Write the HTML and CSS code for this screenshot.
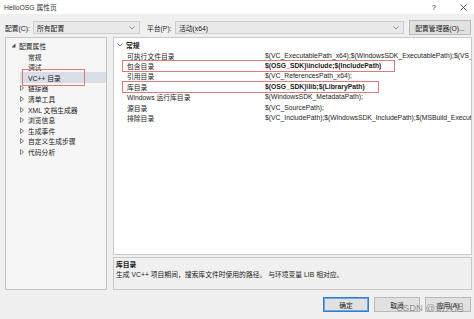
FILE: index.html
```html
<!DOCTYPE html>
<html lang="zh-CN">
<head>
    <meta charset="UTF-8">
    <title>HelloOSG 属性页</title>
    <link rel="stylesheet" href="styles.css">
</head>
<body>
    <div class="dialog">
        <header class="titlebar">
            <span class="title">HelloOSG 属性页</span>
            <div class="window-btns">
                <span class="help">?</span>
                <svg class="close" width="7" height="7" viewBox="0 0 7 7">
                    <path d="M0.5 0.5L6.5 6.5M6.5 0.5L0.5 6.5" stroke="#333" stroke-width="0.8"/>
                </svg>
            </div>
        </header>

        <div class="toolbar">
            <span class="label">配置(C):</span>
            <div class="combo combo-config">
                <span>所有配置</span>
                <svg width="6" height="4" viewBox="0 0 6 4"><path d="M0.5 0.5L3 3L5.5 0.5" fill="none" stroke="#777" stroke-width="0.8"/></svg>
            </div>
            <span class="label label-platform">平台(P):</span>
            <div class="combo combo-platform">
                <span>活动(x64)</span>
                <svg width="6" height="4" viewBox="0 0 6 4"><path d="M0.5 0.5L3 3L5.5 0.5" fill="none" stroke="#777" stroke-width="0.8"/></svg>
            </div>
            <button class="btn btn-manager">配置管理器(O)...</button>
        </div>

        <div class="main">
            <aside class="tree">
                <div class="node level-0">
                    <span class="twisty"><svg width="5" height="5" viewBox="0 0 5 5"><path d="M4.5 0.5V4.5H0.5Z" fill="#444"/></svg></span>
                    <span>配置属性</span>
                </div>
                <div class="node level-1"><span class="twisty"></span><span>常规</span></div>
                <div class="node level-1"><span class="twisty"></span><span>调试</span></div>
                <div class="node level-1 selected"><span class="twisty"></span><span>VC++ 目录</span></div>
                <div class="node level-1 collapsed"><span class="twisty"><svg width="4" height="6" viewBox="0 0 4 6"><path d="M0.5 0.5L3.5 3L0.5 5.5Z" fill="none" stroke="#555" stroke-width="0.7"/></svg></span><span>链接器</span></div>
                <div class="node level-1 collapsed"><span class="twisty"><svg width="4" height="6" viewBox="0 0 4 6"><path d="M0.5 0.5L3.5 3L0.5 5.5Z" fill="none" stroke="#555" stroke-width="0.7"/></svg></span><span>清单工具</span></div>
                <div class="node level-1 collapsed"><span class="twisty"><svg width="4" height="6" viewBox="0 0 4 6"><path d="M0.5 0.5L3.5 3L0.5 5.5Z" fill="none" stroke="#555" stroke-width="0.7"/></svg></span><span>XML 文档生成器</span></div>
                <div class="node level-1 collapsed"><span class="twisty"><svg width="4" height="6" viewBox="0 0 4 6"><path d="M0.5 0.5L3.5 3L0.5 5.5Z" fill="none" stroke="#555" stroke-width="0.7"/></svg></span><span>浏览信息</span></div>
                <div class="node level-1 collapsed"><span class="twisty"><svg width="4" height="6" viewBox="0 0 4 6"><path d="M0.5 0.5L3.5 3L0.5 5.5Z" fill="none" stroke="#555" stroke-width="0.7"/></svg></span><span>生成事件</span></div>
                <div class="node level-1 collapsed"><span class="twisty"><svg width="4" height="6" viewBox="0 0 4 6"><path d="M0.5 0.5L3.5 3L0.5 5.5Z" fill="none" stroke="#555" stroke-width="0.7"/></svg></span><span>自定义生成步骤</span></div>
                <div class="node level-1 collapsed"><span class="twisty"><svg width="4" height="6" viewBox="0 0 4 6"><path d="M0.5 0.5L3.5 3L0.5 5.5Z" fill="none" stroke="#555" stroke-width="0.7"/></svg></span><span>代码分析</span></div>
            </aside>

            <section class="content">
                <div class="grid">
                    <div class="row group">
                        <span class="chevron"><svg width="6" height="4" viewBox="0 0 6 4"><path d="M0.5 0.5L3 3L5.5 0.5" fill="none" stroke="#555" stroke-width="0.8"/></svg></span>
                        <span class="group-name">常规</span>
                    </div>
                    <div class="row"><div class="cells"><span class="name">可执行文件目录</span><span class="value">$(VC_ExecutablePath_x64);$(WindowsSDK_ExecutablePath);$(VS_ExecutablePath);$(MSBuild_ExecutablePath)</span></div></div>
                    <div class="row"><div class="cells marked"><span class="name">包含目录</span><span class="value bold">$(OSG_SDK)\include;$(IncludePath)</span></div></div>
                    <div class="row"><div class="cells"><span class="name">引用目录</span><span class="value">$(VC_ReferencesPath_x64);</span></div></div>
                    <div class="row"><div class="cells marked"><span class="name">库目录</span><span class="value bold">$(OSG_SDK)\lib;$(LibraryPath)</span></div></div>
                    <div class="row"><div class="cells"><span class="name">Windows 运行库目录</span><span class="value">$(WindowsSDK_MetadataPath);</span></div></div>
                    <div class="row"><div class="cells"><span class="name">源目录</span><span class="value">$(VC_SourcePath);</span></div></div>
                    <div class="row"><div class="cells"><span class="name">排除目录</span><span class="value">$(VC_IncludePath);$(WindowsSDK_IncludePath);$(MSBuild_ExecutablePath);$(VC_LibraryPath_x64)</span></div></div>
                </div>
                <div class="desc">
                    <div class="desc-title">库目录</div>
                    <div>生成 VC++ 项目期间，搜索库文件时使用的路径。 与环境变量 LIB 相对应。</div>
                </div>
            </section>
        </div>

        <footer class="footer">
            <button class="btn btn-default">确定</button>
            <button class="btn">取消</button>
            <button class="btn">应用(A)</button>
        </footer>

        <div class="watermark">CSDN @谢大旭</div>
    </div>
</body>
</html>
```

FILE: styles.css
```css
body {
    margin: 0;
    font-family: "Liberation Sans", "Noto Sans CJK SC", sans-serif;
    font-size: 6.8px;
    color: #222;
}

.dialog {
    position: relative;
    width: 474px;
    height: 319px;
    background: #f0f0f0;
    display: flex;
    flex-direction: column;
    overflow: hidden;
}

/* title bar */
.titlebar {
    height: 14px;
    background: #fff;
    display: flex;
    align-items: center;
    justify-content: space-between;
    padding: 0 7px 0 4px;
    color: #333;
}

.window-btns {
    display: flex;
    align-items: center;
    gap: 24px;
}

.help {
    font-size: 7.5px;
}

/* configuration bar */
.toolbar {
    display: flex;
    align-items: center;
    height: 15px;
    margin-top: 6px;
    padding-left: 5px;
}

.label {
    width: 28px;
}

.label-platform {
    margin-left: 7px;
}

.combo {
    height: 13px;
    box-sizing: border-box;
    border: 1px solid #cdcdcd;
    background: #e9e9e9;
    display: flex;
    align-items: center;
    justify-content: space-between;
    padding: 0 4px 0 3px;
}

.combo-config {
    width: 107px;
}

.combo-platform {
    width: 229px;
}

.btn {
    font: inherit;
    color: #222;
    height: 15px;
    width: 46px;
    padding: 0;
    background: #e1e1e1;
    border: 1px solid #b9b9b9;
}

.btn-manager {
    width: 62px;
    margin-left: 5px;
}

/* tree + grid */
.main {
    display: flex;
    gap: 6px;
    height: 253px;
    margin-top: 2px;
    padding: 0 2px 0 5px;
}

.tree {
    width: 102px;
    box-sizing: border-box;
    border: 1px solid #c4c4c4;
    background: #f6f6f6;
    padding-top: 2.7px;
}

.node {
    height: 10.6px;
    display: flex;
    align-items: center;
}

.twisty {
    width: 8px;
    height: 10.6px;
    display: flex;
    align-items: center;
}

.level-0 {
    padding-left: 5px;
}

.level-1 {
    margin-left: 14px;
}

.selected {
    position: relative;
    background: #d9dde6;
}

.selected::after {
    content: "";
    position: absolute;
    left: 2px;
    top: -3.5px;
    width: 63px;
    height: 17px;
    box-sizing: border-box;
    border: 1px solid #e07a7a;
}

.content {
    flex: 1;
    display: flex;
    flex-direction: column;
    gap: 2px;
    min-width: 0;
}

.grid {
    flex: 1;
    background: #fff;
    border: 1px solid #c9c9c9;
    padding-top: 2px;
    overflow: hidden;
}

.row {
    height: 10.4px;
    display: flex;
    align-items: center;
    padding-left: 9px;
}

.group {
    padding-left: 3px;
}

.chevron {
    width: 9px;
    display: flex;
    align-items: center;
}

.group-name {
    font-weight: bold;
}

.cells {
    display: flex;
    align-items: center;
    height: 100%;
    padding-left: 4px;
    flex: 1;
    min-width: 0;
}

.cells.marked {
    flex: none;
    padding-right: 13px;
    outline: 1px solid #e07a7a;
}

.name {
    width: 138px;
    flex: none;
}

.value {
    white-space: nowrap;
    overflow: hidden;
    line-height: 10px;
}

.bold {
    font-weight: bold;
}

.desc {
    height: 33px;
    box-sizing: border-box;
    border: 1px solid #c9c9c9;
    background: #f0f0f0;
    padding: 2px 2px;
    line-height: 10px;
}

.desc-title {
    font-weight: bold;
}

/* dialog buttons */
.footer {
    display: flex;
    justify-content: flex-end;
    gap: 5px;
    margin-top: 7px;
    padding-right: 3px;
}

.btn-default {
    border: 1px solid #2f7fd0;
    box-shadow: inset 0 0 0 1px #6aa7e4;
}

.watermark {
    position: absolute;
    left: 396px;
    top: 300px;
    font-size: 9.5px;
    color: rgba(100, 100, 100, 0.65);
    pointer-events: none;
}
```
